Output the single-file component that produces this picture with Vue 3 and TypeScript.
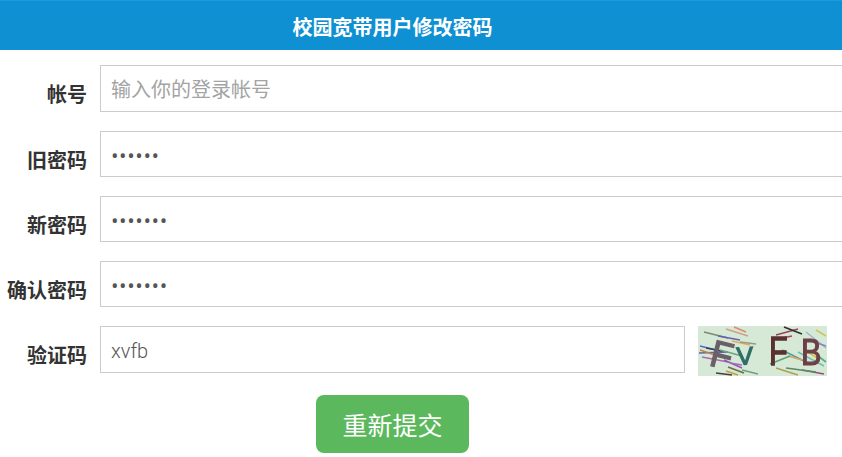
<template>
  <div class="page">
    <header class="title-bar">校园宽带用户修改密码</header>
    <form class="form" @submit.prevent>
      <div v-for="row in rows" :key="row.label" class="form-row">
        <label class="form-label">{{ row.label }}</label>
        <input class="form-input" :type="row.type" :value="row.value" :placeholder="row.placeholder" />
      </div>
      <div class="form-row">
        <label class="form-label">验证码</label>
        <input class="form-input code-input" type="text" value="xvfb" />
        <svg class="captcha" viewBox="0 0 129 50" width="129" height="50">
          <rect width="129" height="50" fill="#d6e8d6" />
          <line
            v-for="(n, i) in noise"
            :key="i"
            :x1="n[0]"
            :y1="n[1]"
            :x2="n[2]"
            :y2="n[3]"
            :stroke="n[4]"
            stroke-width="1.6"
          />
          <text class="cap-letter" fill="#6a6068" stroke="#6a6068" transform="translate(10 39) rotate(14) scale(1 1.05)">F</text>
          <text class="cap-letter small" fill="#2f6f68" stroke="#2f6f68" transform="translate(39 39) rotate(-3)">V</text>
          <text class="cap-letter" fill="#5a3230" stroke="#5a3230" transform="translate(71 39) scale(0.85 1.12)">F</text>
          <text class="cap-letter" fill="#6d4048" stroke="#6d4048" transform="translate(103 39) scale(0.85 1.02)">B</text>
        </svg>
      </div>
      <div class="actions">
        <button class="submit-btn" type="submit">重新提交</button>
      </div>
    </form>
  </div>
</template>

<script setup lang="ts">
interface Row {
  label: string
  type: string
  value: string
  placeholder: string
}

const rows: Row[] = [
  { label: '帐号', type: 'text', value: '', placeholder: '输入你的登录帐号' },
  { label: '旧密码', type: 'password', value: '123456', placeholder: '' },
  { label: '新密码', type: 'password', value: '1234567', placeholder: '' },
  { label: '确认密码', type: 'password', value: '1234567', placeholder: '' }
]

// captcha noise strokes: x1, y1, x2, y2, colour
const noise: [number, number, number, number, string][] = [
  [6, 6, 30, 12, '#7c8a70'],
  [28, 3, 50, 10, '#c9a48c'],
  [36, 1, 48, 6, '#e08a70'],
  [20, 10, 42, 14, '#6a5fb0'],
  [34, 15, 52, 19, '#d8b060'],
  [42, 16, 58, 18, '#a09880'],
  [2, 20, 26, 26, '#4c6fc0'],
  [1, 27, 30, 26, '#5a66a8'],
  [2, 24, 20, 30, '#c08050'],
  [4, 31, 30, 36, '#b06ab0'],
  [8, 22, 24, 25, '#3a3a60'],
  [22, 24, 44, 30, '#70a080'],
  [26, 34, 44, 42, '#8a5ab8'],
  [32, 37, 44, 39, '#b060c0'],
  [30, 41, 46, 47, '#6a7040'],
  [44, 44, 60, 48, '#70a080'],
  [18, 47, 34, 49, '#404040'],
  [28, 45, 40, 49, '#c0a040'],
  [78, 9, 100, 3, '#a04060'],
  [86, 1, 104, 8, '#303030'],
  [80, 13, 94, 10, '#b04060'],
  [84, 24, 112, 38, '#50a0a0'],
  [90, 30, 104, 34, '#e0a060'],
  [78, 42, 100, 49, '#b0a050'],
  [72, 38, 92, 30, '#60a070'],
  [100, 26, 126, 40, '#70c0b0'],
  [108, 6, 128, 22, '#a0b8c8'],
  [118, 4, 128, 10, '#c8c860'],
  [104, 44, 126, 48, '#905080'],
  [110, 26, 122, 34, '#d8c040'],
  [88, 42, 118, 46, '#5a8a60'],
  [116, 16, 128, 20, '#9080c0'],
  [120, 30, 128, 36, '#50b080']
]
</script>

<style>
html,
body {
  overflow: hidden;
  background: #fff;
}
</style>

<style scoped>
.page {
  width: 860px;
  font-family: "Noto Sans CJK SC", "Open Sans", sans-serif;
}

.title-bar {
  height: 49px;
  padding-right: 75px;
  border-top: 1px solid #1a9ae0;
  background: #0e90d2;
  color: #fff;
  font-size: 20px;
  font-weight: 700;
  line-height: 52px;
  text-align: center;
}

.form {
  display: flex;
  flex-direction: column;
  gap: 18.85px;
  padding-top: 15.4px;
}

.form-row {
  display: flex;
  align-items: flex-start;
  height: 46.4px;
}

.form-label {
  flex: none;
  width: 87px;
  margin-right: 13px;
  color: #333;
  font-size: 20px;
  font-weight: 700;
  line-height: 58px;
  text-align: right;
  white-space: nowrap;
}

.form-input {
  flex: 1;
  box-sizing: border-box;
  height: 46.4px;
  padding: 3px 10px 0;
  border: 1px solid #ccc;
  outline: none;
  color: #555;
  font-family: "Roboto", "Noto Sans CJK SC", sans-serif;
  font-size: 20px;
  font-weight: 300;
}

.form-input[type="password"] {
  font-family: "Open Sans", sans-serif;
  font-weight: 400;
  letter-spacing: 0.6px;
}

.form-input::placeholder {
  color: #a3a3a3;
  font-family: "Noto Sans CJK SC", sans-serif;
  font-weight: 400;
}

.code-input {
  flex: none;
  width: 585px;
}

.captcha {
  flex: none;
  display: block;
  margin-left: 13px;
  overflow: visible;
  filter: blur(0.4px);
}

.cap-letter {
  font-family: "Liberation Sans", sans-serif;
  font-size: 36px;
  stroke-width: 1.2px;
}

.cap-letter.small {
  font-size: 25px;
}

.actions {
  display: flex;
  padding: 3px 0 0 316px;
}

.submit-btn {
  width: 153px;
  height: 58px;
  border: none;
  border-radius: 8px;
  background: #5cb85c;
  color: #fff;
  font-family: "Noto Sans CJK SC", sans-serif;
  font-size: 25px;
}
</style>
